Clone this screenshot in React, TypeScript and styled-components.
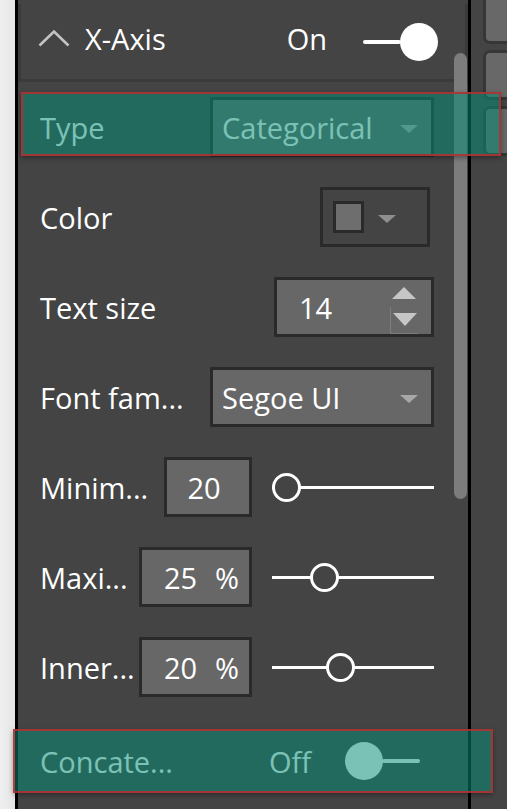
import React from "react";
import styled, { createGlobalStyle } from "styled-components";

const GlobalStyle = createGlobalStyle`
	html, body {
		margin: 0;
		padding: 0;
		background: #444444;
	}
	body {
		font-family: "Open Sans", "Noto Sans", sans-serif;
		overflow: hidden;
	}
`;

const sliders = [
	{ label: "Minim...", value: "20", unit: "", boxWidth: 88, pos: 0 },
	{ label: "Maxi...", value: "25", unit: "%", boxWidth: 113, pos: 0.286 },
	{ label: "Inner...", value: "20", unit: "%", boxWidth: 113, pos: 0.406 },
];

const App = () => {
	return (
		<>
			<GlobalStyle />
			<Shell>
				<Gutter />
				<Rule />
				<Panel>
					<Header>
						<Chevron width="32" height="18" viewBox="0 0 32 18">
							<polyline points="1.5,16.5 16,2.5 30.5,16.5" fill="none" stroke="#c4c4c4" strokeWidth="2.6" />
						</Chevron>
						<HeaderTitle>X-Axis</HeaderTitle>
						<HeaderState>On</HeaderState>
						<Toggle $on>
							<Track />
							<Knob />
						</Toggle>
					</Header>

					<Row $mark="10px -33px 16px 3px">
						<Label>Type</Label>
						<Select>
							<span>Categorical</span>
							<Caret />
						</Select>
					</Row>

					<Row>
						<Label>Color</Label>
						<ColorPicker>
							<Swatch />
							<Caret $dim />
						</ColorPicker>
					</Row>

					<Row>
						<Label>Text size</Label>
						<Spinner>
							<SpinValue>14</SpinValue>
							<Steppers>
								<Step>
									<Arrow $up />
								</Step>
								<Step $focused>
									<Arrow />
								</Step>
							</Steppers>
						</Spinner>
					</Row>

					<Row>
						<Label>Font fam...</Label>
						<Select>
							<span>Segoe UI</span>
							<Caret />
						</Select>
					</Row>

					{sliders.map((s) => (
						<Row key={s.label}>
							<Label>{s.label}</Label>
							<NumberBox $width={s.boxWidth} $centered={!s.unit}>
								<span>{s.value}</span>
								{s.unit && <Unit>{s.unit}</Unit>}
							</NumberBox>
							<Slider>
								<Thumb style={{ marginLeft: `${Math.round(s.pos * 133)}px` }} />
							</Slider>
						</Row>
					))}

					<Row $mark="13px -25px 13px -5px" $gapTop={4}>
						<Label>Concate...</Label>
						<State $gap={14}>Off</State>
						<Toggle $shift={15}>
							<Knob />
							<Track />
						</Toggle>
					</Row>

					<Scrollbar />
				</Panel>
				<Rule />
				<Rail>
					<Tile $first />
					<Tile />
					<Tile />
				</Rail>
			</Shell>
		</>
	);
};

const Shell = styled.div`
	display: flex;
	width: 507px;
	height: 809px;
	overflow: hidden;
	background: #444444;
`;

const Gutter = styled.div`
	width: 15px;
	flex: none;
	background: linear-gradient(to right, #efefef, #e5e5e5);
`;

const Rule = styled.div`
	width: 3px;
	flex: none;
	background: #000;
`;

const Panel = styled.div`
	position: relative;
	width: 450px;
	flex: none;
	background: #444444;
`;

const Header = styled.div`
	display: flex;
	align-items: center;
	height: 75px;
	margin-top: 4px;
	padding: 0 27px 0 17px;
	border: 3px solid #3a3a3a;
	border-top: none;
	color: #fff;
	font-size: 29px;
`;

const Chevron = styled.svg`
	flex: none;
	margin-right: 15px;
	margin-bottom: 7px;
`;

const Row = styled.div<{ $mark?: string; $gapTop?: number }>`
	position: relative;
	display: flex;
	align-items: center;
	gap: 20px;
	height: 90px;
	margin-top: ${(p) => p.$gapTop || 0}px;
	padding: 0 34px 0 22px;
	color: #fff;
	font-size: 29px;

	${(p) =>
		p.$mark &&
		`
		&::after {
			content: "";
			position: absolute;
			inset: ${p.$mark};
			z-index: 3;
			background: rgba(4, 140, 117, 0.53);
			border: 2px solid rgba(186, 44, 46, 0.85);
			box-shadow: 0 2px 5px rgba(0, 0, 0, 0.35);
		}
	`}
`;

const Label = styled.div`
	flex: 1;
	min-width: 0;
	white-space: nowrap;
	line-height: 1;
`;

const HeaderTitle = styled(Label)`
	margin-bottom: 7px;
`;

const State = styled.div<{ $gap?: number }>`
	margin-right: ${(p) => p.$gap || 0}px;
	line-height: 1;
`;

const HeaderState = styled(State)`
	margin-right: 37px;
	margin-bottom: 6px;
`;

const Toggle = styled.div<{ $on?: boolean; $shift?: number }>`
	display: flex;
	align-items: center;
	flex: none;
	margin-right: ${(p) => p.$shift || 0}px;
`;

const Track = styled.div`
	width: 38px;
	height: 4px;
	margin: 0 -1px;
	border-radius: 2px;
	background: #fff;
`;

const Knob = styled.div`
	width: 38px;
	height: 38px;
	border-radius: 50%;
	background: #fff;
`;

const Select = styled.div`
	display: flex;
	align-items: center;
	justify-content: space-between;
	box-sizing: border-box;
	width: 224px;
	height: 60px;
	padding: 0 13px 0 9px;
	border: 3px solid #2a2a2a;
	background: #676767;
	line-height: 1;
`;

const Caret = styled.div<{ $dim?: boolean }>`
	width: 0;
	height: 0;
	border-left: 9px solid transparent;
	border-right: 9px solid transparent;
	border-top: 8px solid ${(p) => (p.$dim ? "#8e8e8e" : "#a8a8a8")};
	margin-top: 4px;
`;

const ColorPicker = styled.div`
	display: flex;
	align-items: center;
	gap: 14px;
	box-sizing: border-box;
	width: 110px;
	height: 60px;
	margin-right: 4px;
	padding-left: 10px;
	border: 3px solid #2a2a2a;
`;

const Swatch = styled.div`
	box-sizing: border-box;
	width: 31px;
	height: 32px;
	border: 3px solid #2a2a2a;
	background: #6e6e6e;
`;

const Spinner = styled.div`
	display: flex;
	align-items: center;
	box-sizing: border-box;
	width: 160px;
	height: 60px;
	padding: 0 13px 0 22px;
	border: 3px solid #2a2a2a;
	background: #676767;
`;

const SpinValue = styled.span`
	flex: 1;
	line-height: 1;
`;

const Steppers = styled.div`
	display: flex;
	flex-direction: column;
	width: 28px;
	height: 54px;
`;

const Step = styled.div<{ $focused?: boolean }>`
	flex: 1;
	display: flex;
	align-items: center;
	justify-content: center;
	box-sizing: border-box;
	${(p) => p.$focused && "border-left: 1px solid #7e7e7e; border-bottom: 1px solid #7e7e7e;"}
`;

const Arrow = styled.div<{ $up?: boolean }>`
	width: 0;
	height: 0;
	border-left: 12px solid transparent;
	border-right: 12px solid transparent;
	${(p) => (p.$up ? "border-bottom: 12px solid #c6c6c6;" : "border-top: 13px solid #c6c6c6;")}
`;

const NumberBox = styled.div<{ $width: number; $centered?: boolean }>`
	display: flex;
	align-items: center;
	justify-content: ${(p) => (p.$centered ? "center" : "space-between")};
	box-sizing: border-box;
	width: ${(p) => p.$width}px;
	height: 60px;
	padding: ${(p) => (p.$centered ? "0 8px 0 0" : "0 10px 0 22px")};
	border: 3px solid #2a2a2a;
	background: #676767;
	flex: none;
	line-height: 1;
`;

const Unit = styled.span``;

const Slider = styled.div`
	display: flex;
	align-items: center;
	width: 162px;
	height: 29px;
	flex: none;
	background: linear-gradient(#fff, #fff) center / 100% 3px no-repeat;
`;

const Thumb = styled.div`
	box-sizing: border-box;
	width: 29px;
	height: 29px;
	border: 3px solid #fff;
	border-radius: 50%;
	background: #444444;
`;

const Scrollbar = styled.div`
	position: absolute;
	top: 53px;
	right: 1px;
	width: 13px;
	height: 446px;
	border-radius: 7px;
	background: #7c7c7c;
	z-index: 2;
`;

const Rail = styled.div`
	flex: 1;
	display: flex;
	flex-direction: column;
	gap: 6px;
	padding-left: 12px;
	background: #444444;
`;

const Tile = styled.div<{ $first?: boolean }>`
	box-sizing: border-box;
	height: 50px;
	margin-top: ${(p) => (p.$first ? "-6px" : "0")};
	border: 3px solid #363636;
	border-right: none;
	border-radius: 7px 0 0 7px;
	background: #686868;
`;

export default App;
